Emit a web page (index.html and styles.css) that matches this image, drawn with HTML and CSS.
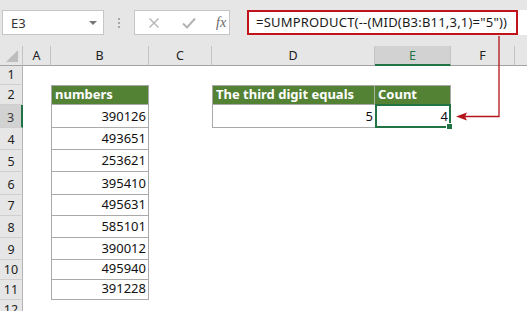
FILE: index.html
```html
<!DOCTYPE html>
<html>
<head>
<meta charset="utf-8">
<link rel="stylesheet" href="styles.css">
</head>
<body>
<div class="app">
  <div class="fbar">
    <div class="namebox"><span class="ref">E3</span><span class="caret"></span></div>
    <div class="grip"><i></i><i></i><i></i></div>
    <div class="fxbox">
      <svg class="ico" width="12" height="12" viewBox="0 0 12 12"><path d="M1.5 1.5 L10.5 10.5 M10.5 1.5 L1.5 10.5" stroke="#b4b4b4" stroke-width="1.4" fill="none"/></svg>
      <svg class="ico" width="14" height="12" viewBox="0 0 14 12"><path d="M1 6.5 L5 10.5 L13 1.5" stroke="#b4b4b4" stroke-width="2" fill="none"/></svg>
      <span class="fx">fx</span>
    </div>
    <div class="finput"><div class="formula">=SUMPRODUCT(--(MID(B3:B11,3,1)="5"))</div></div>
  </div>

  <div class="sheet">
    <div class="ch corner"><span class="tri"></span></div>
    <div class="ch">A</div><div class="ch">B</div><div class="ch">C</div><div class="ch">D</div><div class="ch sel">E</div><div class="ch">F</div><div class="ch last"></div>

    <div class="rh">1</div><div></div><div></div><div></div><div></div><div></div><div></div><div></div>

    <div class="rh">2</div><div></div><div class="th tb top">numbers</div><div></div><div class="th top dl dmid">The third digit equals</div><div class="th top er">Count</div><div></div><div></div>

    <div class="rh sel">3</div><div></div><div class="tb">390126</div><div></div><div class="tv dl">5</div><div class="tv active">4<span class="handle"></span></div><div></div><div></div>

    <div class="rh">4</div><div></div><div class="tb">493651</div><div></div><div></div><div></div><div></div><div></div>
    <div class="rh">5</div><div></div><div class="tb">253621</div><div></div><div></div><div></div><div></div><div></div>
    <div class="rh">6</div><div></div><div class="tb">395410</div><div></div><div></div><div></div><div></div><div></div>
    <div class="rh">7</div><div></div><div class="tb">495631</div><div></div><div></div><div></div><div></div><div></div>
    <div class="rh">8</div><div></div><div class="tb">585101</div><div></div><div></div><div></div><div></div><div></div>
    <div class="rh">9</div><div></div><div class="tb">390012</div><div></div><div></div><div></div><div></div><div></div>
    <div class="rh">10</div><div></div><div class="tb">495940</div><div></div><div></div><div></div><div></div><div></div>
    <div class="rh">11</div><div></div><div class="tb">391228</div><div></div><div></div><div></div><div></div><div></div>
    <div class="rh clip">12</div><div></div><div></div><div></div><div></div><div></div><div></div><div></div>
  </div>

  <svg class="arrow" width="527" height="311" viewBox="0 0 527 311">
    <path d="M499 36 V116.5 H464" stroke="#b2151b" stroke-width="1.3" fill="none"/>
    <path d="M456 116.5 L467 112.5 L465 116.5 L467 120.5 Z" fill="#b2151b"/>
  </svg>
</div>
</body>
</html>
```

FILE: styles.css
```css
html, body {
  margin: 0;
  padding: 0;
  background: #fff;
}
.app {
  position: relative;
  width: 527px;
  height: 311px;
  overflow: hidden;
  font-family: "Noto Sans", "Open Sans", sans-serif;
  color: #1f1f1f;
}
.fbar {
  height: 46px;
  background: #e6e6e6;
  display: flex;
  align-items: flex-start;
  box-sizing: border-box;
  padding-top: 10px;
}
.namebox {
  margin-left: 2px;
  width: 102px;
  height: 25px;
  box-sizing: border-box;
  background: #fff;
  border: 1px solid #c6c6c6;
  display: flex;
  align-items: center;
  justify-content: space-between;
  padding: 0 6px 0 8px;
}
.ref {
  font-size: 13px;
  color: #333;
}
.caret {
  width: 0;
  height: 0;
  border-left: 4px solid transparent;
  border-right: 4px solid transparent;
  border-top: 4px solid #777;
}
.grip {
  width: 30px;
  height: 25px;
  display: flex;
  flex-direction: column;
  align-items: center;
  justify-content: center;
  gap: 2px;
}
.grip i {
  width: 2px;
  height: 2px;
  background: #a8a8a8;
}
.fxbox {
  width: 96px;
  height: 25px;
  box-sizing: border-box;
  background: #fff;
  border: 1px solid #c6c6c6;
  display: flex;
  align-items: center;
  padding-left: 13px;
}
.fxbox .ico:nth-child(2) {
  margin-left: 22px;
}
.fx {
  margin-left: 20px;
  font-family: "Liberation Serif", serif;
  font-style: italic;
  font-size: 14px;
  color: #666;
}
.finput {
  margin-left: 17px;
  flex: 1;
  height: 25px;
  background: #fff;
}
.formula {
  width: 271px;
  height: 25px;
  box-sizing: border-box;
  border: 2px solid #c0141a;
  font-size: 13px;
  letter-spacing: 0.2px;
  line-height: 21px;
  padding-left: 7px;
  white-space: nowrap;
  color: #1a1a1a;
}

.sheet {
  display: grid;
  grid-template-columns: 23px 28px 98px 63px 163px 76px 64px 1fr;
  grid-template-rows: 20px 19px 20px 23px 22px 22px 23px 21px 22px 22px 20px 20px 11px;
  font-size: 13px;
}
.sheet > div {
  box-sizing: border-box;
  display: flex;
  align-items: flex-end;
  padding-bottom: 2px;
  white-space: nowrap;
}
.sheet > .ch {
  background: #e6e6e6;
  border-right: 1px solid #c3c3c3;
  border-bottom: 1px solid #a3a3a3;
  justify-content: center;
  align-items: center;
  padding: 0;
  font-size: 12.5px;
  color: #222;
}
.sheet > .ch.last {
  border-right: none;
}
.sheet > .ch.sel {
  background: #d2d2d2;
  color: #217346;
  border-bottom: 2px solid #217346;
}
.corner {
  position: relative;
}
.tri {
  position: absolute;
  right: 4px;
  bottom: 3px;
  width: 0;
  height: 0;
  border-left: 12px solid transparent;
  border-bottom: 12px solid #bdbdbd;
}
.sheet > .rh {
  background: #e6e6e6;
  border-right: 1px solid #b5b5b5;
  border-bottom: 1px solid #cfcfcf;
  justify-content: center;
  font-size: 12.5px;
  color: #222;
  padding-bottom: 1px;
}
.sheet > .rh.clip {
  align-items: flex-start;
  padding: 3px 0 0;
  overflow: hidden;
  border-bottom: none;
  line-height: 14px;
}
.sheet > .rh.sel {
  background: #d2d2d2;
  border-right: 2px solid #217346;
  color: #3c3c3c;
}
.sheet > .tb {
  border-left: 1px solid #a9a9a9;
  border-right: 1px solid #a9a9a9;
  border-bottom: 1px solid #a9a9a9;
  justify-content: flex-end;
  padding-right: 2px;
  color: #111;
}
.sheet > .th {
  background: #548235;
  color: #fff;
  font-weight: 700;
  justify-content: flex-start;
  padding-left: 3px;
  padding-bottom: 1px;
  border-bottom: 1px solid #a9a9a9;
}
.sheet > .top {
  border-top: 1px solid #a9a9a9;
}
.sheet > .dl {
  border-left: 1px solid #a9a9a9;
}
.sheet > .dmid {
  border-right: 1px solid #a8b59c;
}
.sheet > .er {
  border-right: 1px solid #a9a9a9;
}
.sheet > .tv {
  justify-content: flex-end;
  padding-right: 2px;
  border-bottom: 1px solid #a9a9a9;
  color: #111;
}
.sheet > .active {
  position: relative;
  border: 2px solid #217346;
  margin-top: -1px;
  padding-right: 1px;
  padding-bottom: 1px;
}
.handle {
  position: absolute;
  right: -4px;
  bottom: -4px;
  width: 5px;
  height: 5px;
  background: #217346;
  border: 1px solid #fff;
}
.arrow {
  position: absolute;
  left: 0;
  top: 0;
  pointer-events: none;
}
```
